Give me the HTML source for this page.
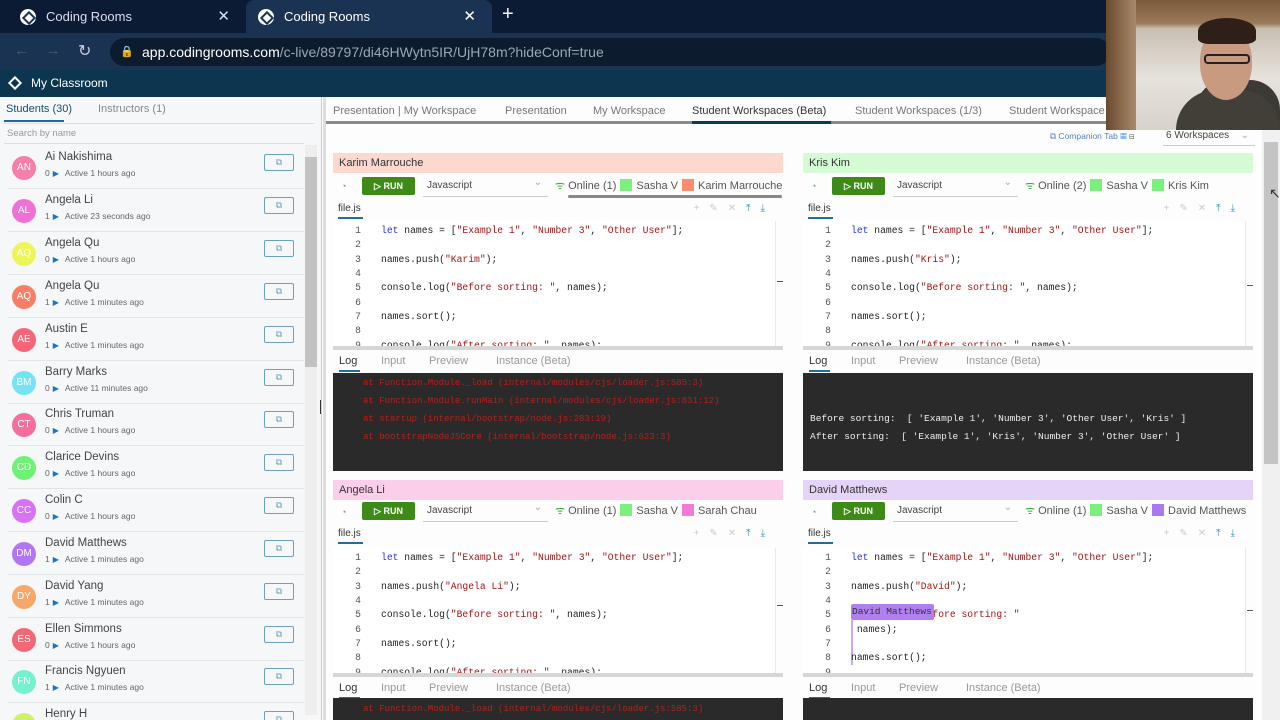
<!DOCTYPE html>
<html style="overflow:hidden;width:1280px;height:720px"><head><meta charset="utf-8"><style>
*{box-sizing:border-box;margin:0;padding:0}
body{width:1280px;height:720px;overflow:hidden;position:relative;font-family:"Liberation Sans",sans-serif;background:#fff;color:#333}
.a{position:absolute}
.tabs{left:0;top:0;width:1280px;height:33px;background:#0b1b33}
.tab{top:0;height:33px;width:238px;color:#fff;font-size:13px;line-height:33px;padding-left:46px}
.ticon{position:absolute;left:20px;top:9px;width:16px;height:16px;border-radius:50%;background:#fff}
.ticon:after{content:"";position:absolute;left:4px;top:4px;width:6px;height:6px;border:2px solid #1b3354;transform:rotate(45deg)}
.tx{position:absolute;right:8px;top:0;font-size:15px}
.addr{left:0;top:33px;width:1280px;height:37px;background:#1a3352}
.url{left:110px;top:38px;width:1000px;height:28px;border-radius:14px;background:#0d1b2e;color:#9aa6b5;font-size:14px;line-height:28px;padding-left:32px}
.url b{font-weight:normal;color:#fff}
.cls{left:0;top:70px;width:1280px;height:27px;background:#0c3550;color:#fff;font-size:12px;line-height:27px;padding-left:31px}
.side{left:0;top:97px;width:322px;height:623px;background:#f5f7f9;border-right:1px solid #ccc;overflow:hidden}
.row{left:8px;width:296px;height:43px;border-bottom:1px solid #e2e5e8}
.av{position:absolute;left:4px;top:10px;width:24px;height:24px;border-radius:50%;color:#fff;font-size:10px;text-align:center;line-height:24px;opacity:.85}
.nm{position:absolute;left:37px;top:5px;font-size:11.5px;color:#444}
.sb{position:absolute;left:37px;top:22px;font-size:8.5px;color:#666}
.sb i{font-style:normal;color:#1a73c8;font-size:8px;margin:0 6px 0 3px}
.ob{position:absolute;left:256px;top:8px;width:30px;height:17px;border:1px solid #6aa3b8;border-radius:2px;color:#6aa3b8;font-size:9px;text-align:center;line-height:15px}
.wt{top:98px;height:27px;font-size:11px;color:#777;line-height:26px}
.p{width:450px;height:320px;overflow:hidden}
.hd{position:absolute;left:0;top:0;width:450px;height:20px;font-size:11px;line-height:20px;padding-left:6px;color:#333}
.run{position:absolute;left:29px;top:24px;width:53px;height:18px;background:#3e8a17;border-radius:2px;color:#fff;font-size:9px;font-weight:bold;line-height:18px;text-align:center}
.ic{position:absolute;left:8px;top:28px;font-size:9px;color:#59a}
.sel{position:absolute;left:90px;top:24px;width:125px;height:20px;border-bottom:1px solid #ccc;font-size:10px;line-height:18px;padding-left:4px;color:#444}
.sel:after{content:"⌄";position:absolute;right:6px;top:-3px;color:#aaa}
.onl{position:absolute;left:222px;top:24px;font-size:11px;line-height:18px;color:#555;white-space:nowrap}
.sq{display:inline-block;width:12px;height:12px;vertical-align:-2px;margin:0 4px}
.fj{position:absolute;left:5px;top:48px;height:18px;font-size:10px;line-height:16px;border-bottom:2px solid #1e6fa0;width:25px}
.tools{position:absolute;right:8px;top:50px;font-size:10px;color:#ccc;letter-spacing:10px}
.code{position:absolute;left:0;top:68px;width:443px;height:125px;background:#fff;overflow:hidden;border-right:1px solid #e8e8e8;font-family:"Liberation Mono",monospace;font-size:9.7px}
.ln{position:absolute;left:18px;width:10px;text-align:right;color:#555}
.cl{position:absolute;left:48px;white-space:pre;color:#222}
.k{color:#2733d8}.s{color:#a31515}
.bar{position:absolute;left:0;top:193px;width:450px;height:4px;background:#d6d6d6}
.lt{position:absolute;top:197px;left:0;width:450px;height:22px;font-size:11px;color:#999;line-height:22px}
.lt span{position:absolute}
.term{position:absolute;left:0;top:220px;width:450px;height:98px;background:#2a2a2a;font-family:"Liberation Mono",monospace;font-size:9px;line-height:18px;padding-left:30px;color:#b5201b;white-space:pre}
</style></head><body>
<div class="a tabs"></div>
<div class="a tab" style="left:0;color:#dde">
<div class="ticon"></div>Coding Rooms<span class="tx">✕</span></div>
<div class="a tab" style="left:246px;background:#1a3352;border-radius:8px 8px 0 0;width:246px;padding-left:38px">
<div class="ticon" style="left:12px"></div>Coding Rooms<span class="tx" style="right:16px">✕</span></div>
<div class="a" style="left:502px;top:3px;color:#fff;font-size:20px">+</div>
<div class="a addr"></div>
<div class="a" style="left:14px;top:42px;color:#556;font-size:15px">←&nbsp;&nbsp;&nbsp;&nbsp;→</div>
<div class="a" style="left:78px;top:41px;color:#ccd;font-size:16px">↻</div>
<div class="a url"><span style="position:absolute;left:10px;top:0;color:#ddd;font-size:11px">🔒</span><b>app.codingrooms.com</b>/c-live/89797/di46HWytn5IR/UjH78m?hideConf=true</div>
<div class="a cls">My Classroom</div>
<div class="a" style="left:10px;top:78px;width:10px;height:10px;border:2px solid #fff;transform:rotate(45deg)"></div>

<div class="a side">
<div class="a" style="left:6px;top:6px;font-size:11px;color:#1b4e6e">Students (30)</div>
<div class="a" style="left:4px;top:23px;width:60px;height:2px;background:#1d6a94"></div>
<div class="a" style="left:98px;top:6px;font-size:11px;color:#888">Instructors (1)</div>
<div class="a" style="left:4px;top:26px;width:310px;height:1px;background:#ddd"></div>
<div class="a" style="left:7px;top:31px;font-size:9.5px;color:#999">Search by name</div>
<div class="a" style="left:4px;top:46px;width:300px;height:1px;background:#ddd"></div>
<div class="a" style="left:305px;top:48px;width:12px;height:570px;background:#eee"></div>
<div class="a" style="left:305px;top:60px;width:12px;height:210px;background:#c2c2c2"></div>
<div class="a" style="left:320px;top:303px;width:3px;height:14px;background:#333"></div>
</div>
<div class="a row" style="top:146px"><div class="av" style="background:#f46b9a">AN</div><div class="nm">Ai Nakishima</div><div class="sb">0<i>▶</i>Active 1 hours ago</div><div class="ob">⧉</div></div>
<div class="a row" style="top:189px"><div class="av" style="background:#f05ad0">AL</div><div class="nm">Angela Li</div><div class="sb">1<i>▶</i>Active 23 seconds ago</div><div class="ob">⧉</div></div>
<div class="a row" style="top:232px"><div class="av" style="background:#ecf540">AQ</div><div class="nm">Angela Qu</div><div class="sb">0<i>▶</i>Active 1 hours ago</div><div class="ob">⧉</div></div>
<div class="a row" style="top:275px"><div class="av" style="background:#fa6a4d">AQ</div><div class="nm">Angela Qu</div><div class="sb">1<i>▶</i>Active 1 minutes ago</div><div class="ob">⧉</div></div>
<div class="a row" style="top:318px"><div class="av" style="background:#f54e62">AE</div><div class="nm">Austin E</div><div class="sb">1<i>▶</i>Active 1 minutes ago</div><div class="ob">⧉</div></div>
<div class="a row" style="top:361px"><div class="av" style="background:#5ee0f5">BM</div><div class="nm">Barry Marks</div><div class="sb">0<i>▶</i>Active 11 minutes ago</div><div class="ob">⧉</div></div>
<div class="a row" style="top:403px"><div class="av" style="background:#f7588c">CT</div><div class="nm">Chris Truman</div><div class="sb">0<i>▶</i>Active 1 hours ago</div><div class="ob">⧉</div></div>
<div class="a row" style="top:446px"><div class="av" style="background:#58f060">CD</div><div class="nm">Clarice Devins</div><div class="sb">0<i>▶</i>Active 1 hours ago</div><div class="ob">⧉</div></div>
<div class="a row" style="top:489px"><div class="av" style="background:#d25cf2">CC</div><div class="nm">Colin C</div><div class="sb">0<i>▶</i>Active 1 hours ago</div><div class="ob">⧉</div></div>
<div class="a row" style="top:532px"><div class="av" style="background:#a660f2">DM</div><div class="nm">David Matthews</div><div class="sb">1<i>▶</i>Active 1 minutes ago</div><div class="ob">⧉</div></div>
<div class="a row" style="top:575px"><div class="av" style="background:#f89a52">DY</div><div class="nm">David Yang</div><div class="sb">1<i>▶</i>Active 1 minutes ago</div><div class="ob">⧉</div></div>
<div class="a row" style="top:618px"><div class="av" style="background:#f45060">ES</div><div class="nm">Ellen Simmons</div><div class="sb">0<i>▶</i>Active 1 hours ago</div><div class="ob">⧉</div></div>
<div class="a row" style="top:660px"><div class="av" style="background:#5ef0c8">FN</div><div class="nm">Francis Ngyuen</div><div class="sb">1<i>▶</i>Active 1 minutes ago</div><div class="ob">⧉</div></div>
<div class="a row" style="top:703px;height:17px;overflow:hidden;border:0"><div class="av" style="background:#c8f050">HH</div><div class="nm">Henry H</div><div class="ob">⧉</div></div>

<div class="a" style="left:323px;top:97px;width:957px;height:623px;background:#fdfdfd;border-left:3px solid #ddd"></div>
<div class="a" style="left:326px;top:121px;width:780px;height:3px;background:#8a8a8a"></div>
<div class="a wt" style="left:333px">Presentation | My Workspace</div>
<div class="a wt" style="left:505px">Presentation</div>
<div class="a wt" style="left:593px">My Workspace</div>
<div class="a wt" style="left:692px;color:#333">Student Workspaces (Beta)</div>
<div class="a" style="left:692px;top:121px;width:139px;height:3px;background:#0c3a55"></div>
<div class="a wt" style="left:855px">Student Workspaces (1/3)</div>
<div class="a wt" style="left:1009px">Student Workspace</div>
<div class="a" style="left:1050px;top:131px;font-size:8.5px;color:#5a7ec0">⧉ Companion Tab <span style="color:#4a8ee0">▦</span> <span style="color:#555">⊟</span></div>
<div class="a" style="left:1163px;top:130px;width:92px;height:16px;border-bottom:1px solid #ccc;font-size:10px;color:#444;padding-left:3px">6 Workspaces <span style="color:#aaa;float:right;margin-right:6px">⌄</span></div>
<div class="a" style="left:1262px;top:130px;width:18px;height:590px;background:#f0f0f0"></div>
<div class="a" style="left:1264px;top:142px;width:14px;height:322px;background:#c4c4c4"></div>
<div class="a" style="left:1269px;top:185px;font-size:14px">↖</div>

<!-- Panel 1 -->
<div class="a p" style="left:333px;top:153px">
<div class="hd" style="background:#fcd8cf">Karim Marrouche</div>
<div class="ic">◔</div><div class="run">▷ RUN</div><div class="sel">Javascript</div>
<div class="onl"><span style="color:#3a3">ᯤ</span> Online (1)<span class="sq" style="background:#7cf07c"></span>Sasha V<span class="sq" style="background:#fa8c6c"></span>Karim Marrouche</div>
<div style="position:absolute;left:235px;top:42px;width:214px;height:3px;background:#888;border-radius:2px"></div>
<div class="fj">file.js</div><div class="tools">+✎✕<span style="color:#3b8ec0">⤒⤓</span></div>
<div class="code"><div class="ln" style="top:4px">1</div><div class="ln" style="top:18px">2</div><div class="ln" style="top:33px">3</div><div class="ln" style="top:47px">4</div><div class="ln" style="top:61px">5</div><div class="ln" style="top:76px">6</div><div class="ln" style="top:90px">7</div><div class="ln" style="top:104px">8</div><div class="ln" style="top:119px">9</div>
<div class="cl" style="top:4px"><span class="k">let</span> names = [<span class="s">"Example 1"</span>, <span class="s">"Number 3"</span>, <span class="s">"Other User"</span>];</div>
<div class="cl" style="top:33px">names.push(<span class="s">"Karim"</span>);</div>
<div class="cl" style="top:61px">console.log(<span class="s">"Before sorting: "</span>, names);</div>
<div class="cl" style="top:90px">names.sort();</div>
<div class="cl" style="top:119px">console.log(<span class="s">"After sorting: "</span>, names);</div></div>
<div style="position:absolute;left:444px;top:128px;width:8px;height:1px;background:#555"></div>
<div class="bar"></div>
<div class="lt"><span style="left:6px;color:#333">Log</span><span style="left:48px">Input</span><span style="left:96px">Preview</span><span style="left:163px">Instance (Beta)</span><span style="left:6px;top:20px;width:21px;height:2px;background:#1e6fa0"></span></div>
<div class="term" style="padding-top:1px">at Function.Module._load (internal/modules/cjs/loader.js:585:3)
at Function.Module.runMain (internal/modules/cjs/loader.js:831:12)
at startup (internal/bootstrap/node.js:283:19)
at bootstrapNodeJSCore (internal/bootstrap/node.js:623:3)</div>
</div>

<!-- Panel 2 -->
<div class="a p" style="left:803px;top:153px">
<div class="hd" style="background:#d4fbd4">Kris Kim</div>
<div class="ic">◔</div><div class="run">▷ RUN</div><div class="sel">Javascript</div>
<div class="onl"><span style="color:#3a3">ᯤ</span> Online (2)<span class="sq" style="background:#7cf07c"></span>Sasha V<span class="sq" style="background:#7cf07c"></span>Kris Kim</div>
<div class="fj">file.js</div><div class="tools">+✎✕<span style="color:#3b8ec0">⤒⤓</span></div>
<div class="code"><div class="ln" style="top:4px">1</div><div class="ln" style="top:18px">2</div><div class="ln" style="top:33px">3</div><div class="ln" style="top:47px">4</div><div class="ln" style="top:61px">5</div><div class="ln" style="top:76px">6</div><div class="ln" style="top:90px">7</div><div class="ln" style="top:104px">8</div><div class="ln" style="top:119px">9</div>
<div class="cl" style="top:4px"><span class="k">let</span> names = [<span class="s">"Example 1"</span>, <span class="s">"Number 3"</span>, <span class="s">"Other User"</span>];</div>
<div class="cl" style="top:33px">names.push(<span class="s">"Kris"</span>);</div>
<div class="cl" style="top:61px">console.log(<span class="s">"Before sorting: "</span>, names);</div>
<div class="cl" style="top:90px">names.sort();</div>
<div class="cl" style="top:119px">console.log(<span class="s">"After sorting: "</span>, names);</div></div>
<div style="position:absolute;left:444px;top:132px;width:8px;height:1px;background:#555"></div>
<div class="bar"></div>
<div class="lt"><span style="left:6px;color:#333">Log</span><span style="left:48px">Input</span><span style="left:96px">Preview</span><span style="left:163px">Instance (Beta)</span><span style="left:6px;top:20px;width:21px;height:2px;background:#1e6fa0"></span></div>
<div class="term" style="color:#eee;padding:37px 0 0 7px;font-size:9.5px">Before sorting:  [ 'Example 1', 'Number 3', 'Other User', 'Kris' ]
After sorting:  [ 'Example 1', 'Kris', 'Number 3', 'Other User' ]</div>
</div>

<!-- Panel 3 -->
<div class="a p" style="left:333px;top:480px;height:240px">
<div class="hd" style="background:#fbcfe9">Angela Li</div>
<div class="ic" style="top:27px">◔</div><div class="run" style="top:22px">▷ RUN</div><div class="sel" style="top:22px">Javascript</div>
<div class="onl" style="top:22px"><span style="color:#3a3">ᯤ</span> Online (1)<span class="sq" style="background:#7cf07c"></span>Sasha V<span class="sq" style="background:#f57ad8"></span>Sarah Chau</div>
<div class="fj" style="top:46px">file.js</div><div class="tools" style="top:48px">+✎✕<span style="color:#3b8ec0">⤒⤓</span></div>
<div class="code"><div class="ln" style="top:4px">1</div><div class="ln" style="top:18px">2</div><div class="ln" style="top:33px">3</div><div class="ln" style="top:47px">4</div><div class="ln" style="top:61px">5</div><div class="ln" style="top:76px">6</div><div class="ln" style="top:90px">7</div><div class="ln" style="top:104px">8</div><div class="ln" style="top:119px">9</div>
<div class="cl" style="top:4px"><span class="k">let</span> names = [<span class="s">"Example 1"</span>, <span class="s">"Number 3"</span>, <span class="s">"Other User"</span>];</div>
<div class="cl" style="top:33px">names.push(<span class="s">"Angela Li"</span>);</div>
<div class="cl" style="top:61px">console.log(<span class="s">"Before sorting: "</span>, names);</div>
<div class="cl" style="top:90px">names.sort();</div>
<div class="cl" style="top:119px">console.log(<span class="s">"After sorting: "</span>, names);</div></div>
<div style="position:absolute;left:444px;top:125px;width:8px;height:1px;background:#555"></div>
<div class="bar"></div>
<div class="lt"><span style="left:6px;color:#333">Log</span><span style="left:48px">Input</span><span style="left:96px">Preview</span><span style="left:163px">Instance (Beta)</span><span style="left:6px;top:20px;width:21px;height:2px;background:#1e6fa0"></span></div>
<div class="term" style="top:218px;height:22px;line-height:22px">at Function.Module._load (internal/modules/cjs/loader.js:585:3)</div>
</div>

<!-- Panel 4 -->
<div class="a p" style="left:803px;top:480px;height:240px">
<div class="hd" style="background:#e5d4f8">David Matthews</div>
<div class="ic" style="top:27px">◔</div><div class="run" style="top:22px">▷ RUN</div><div class="sel" style="top:22px">Javascript</div>
<div class="onl" style="top:22px"><span style="color:#3a3">ᯤ</span> Online (1)<span class="sq" style="background:#7cf07c"></span>Sasha V<span class="sq" style="background:#a878f2"></span>David Matthews</div>
<div class="fj" style="top:46px">file.js</div><div class="tools" style="top:48px">+✎✕<span style="color:#3b8ec0">⤒⤓</span></div>
<div class="code"><div class="ln" style="top:4px">1</div><div class="ln" style="top:18px">2</div><div class="ln" style="top:33px">3</div><div class="ln" style="top:47px">4</div><div class="ln" style="top:61px">5</div><div class="ln" style="top:76px">6</div><div class="ln" style="top:90px">7</div><div class="ln" style="top:104px">8</div><div class="ln" style="top:119px">9</div>
<div class="cl" style="top:4px"><span class="k">let</span> names = [<span class="s">"Example 1"</span>, <span class="s">"Number 3"</span>, <span class="s">"Other User"</span>];</div>
<div class="cl" style="top:33px">names.push(<span class="s">"David"</span>);</div>
<div class="cl" style="top:61px">             <span class="s">efore sorting: "</span></div>
<div style="position:absolute;left:48px;top:56px;width:83px;height:16px;background:#b080f0;border-radius:2px;font-family:'Liberation Mono',monospace;font-size:9.5px;line-height:15px;padding-left:1px">David Matthews</div>
<div style="position:absolute;left:48px;top:72px;width:2px;height:45px;background:#c8a8f4"></div>
<div class="cl" style="top:76px"> names);</div>
<div class="cl" style="top:104px">names.sort();</div></div>
<div style="position:absolute;left:444px;top:130px;width:8px;height:1px;background:#555"></div>
<div class="bar"></div>
<div class="lt"><span style="left:6px;color:#333">Log</span><span style="left:48px">Input</span><span style="left:96px">Preview</span><span style="left:163px">Instance (Beta)</span><span style="left:6px;top:20px;width:21px;height:2px;background:#1e6fa0"></span></div>
<div class="term" style="top:218px;height:22px"></div>
</div>

<!-- webcam -->
<div class="a" style="left:1106px;top:0;width:174px;height:130px;background:linear-gradient(180deg,#7a5a3a 0,#9a7a5a 18%,#c8bfb2 22%,#e6e2dc 60%,#d8d2ca 100%)"></div>
<div class="a" style="left:1106px;top:0;width:30px;height:130px;background:linear-gradient(90deg,#6a4a2e,#a88a6a)"></div>
<div class="a" style="left:1196px;top:80px;width:84px;height:50px;background:#3c3a34;border-radius:30px 30px 0 0"></div>
<div class="a" style="left:1176px;top:90px;width:104px;height:40px;background:#423f38;border-radius:40px 40px 0 0"></div>
<div class="a" style="left:1200px;top:28px;width:52px;height:72px;background:#c89a80;border-radius:45% 45% 50% 50%"></div>
<div class="a" style="left:1198px;top:18px;width:58px;height:26px;background:#2e2018;border-radius:50% 50% 20% 20%"></div>
<div class="a" style="left:1204px;top:54px;width:46px;height:10px;border:2px solid #222;border-radius:4px"></div>
</body></html>
